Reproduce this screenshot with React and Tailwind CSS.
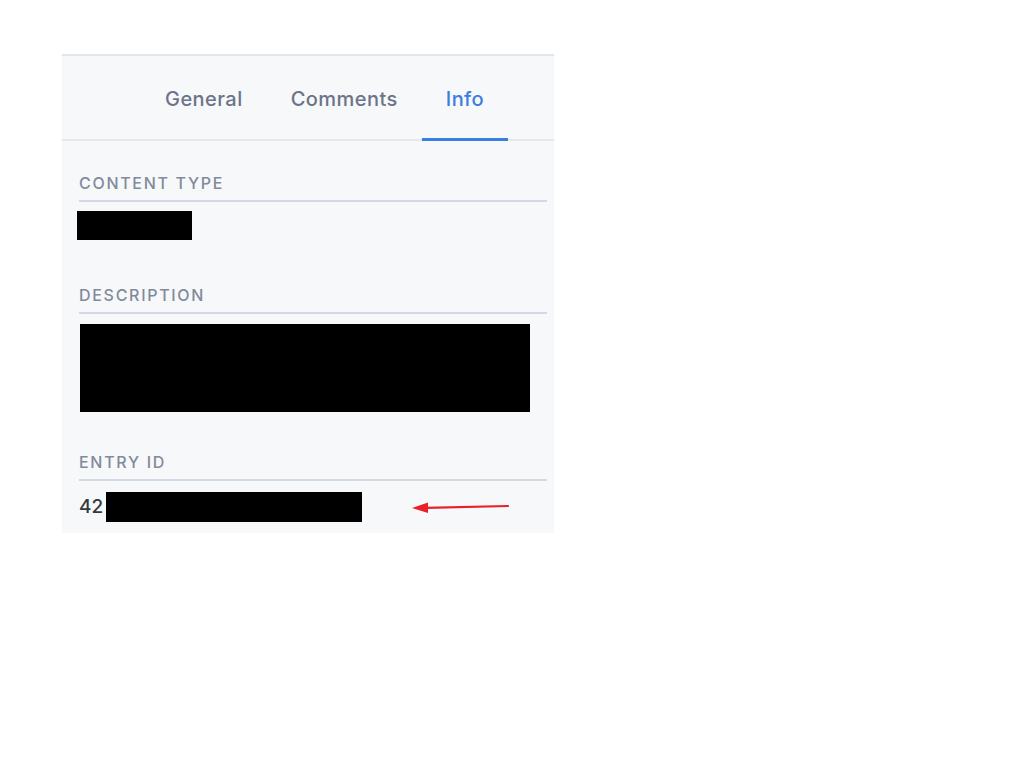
const tabs = [
  { label: "General", active: false },
  { label: "Comments", active: false },
  { label: "Info", active: true },
];

function Redacted({ className }) {
  return <div className={"bg-black " + className} />;
}

function FieldLabel({ children }) {
  return (
    <div className="border-b-2 border-[#d3d9e3] pb-[7px] text-[16px] leading-[20px] tracking-[1.7px] font-medium uppercase text-[#818a9c]">
      {children}
    </div>
  );
}

export default function App() {
  return (
    <div className="min-h-screen bg-white" style={{ fontFamily: "Inter, 'Noto Sans', sans-serif" }}>
      <div className="ml-[62px] pt-[54px] w-[492px]">
        <div className="bg-[#f7f8f9] border-t-2 border-[#e1e5ec]">
          <div className="flex pl-[79px] h-[85px] pt-[3px] border-b-2 border-[#e4e7eb]">
            {tabs.map((t) => (
              <div
                key={t.label}
                className={
                  "flex items-center px-6 text-[20px] tracking-[0.45px] font-medium -mb-[2px] border-b-[3px] " +
                  (t.active ? "text-[#3b7de3] border-[#3b7de3]" : "text-[#6b7489] border-transparent")
                }
              >
                {t.label}
              </div>
            ))}
          </div>

          <div className="pl-[17px] pr-[7px] pb-[11px]">
            <div className="pt-[32px]">
              <FieldLabel>Content Type</FieldLabel>
              <Redacted className="mt-[9px] h-[29px] w-[115px] -ml-[2px]" />
            </div>

            <div className="pt-[45px]">
              <FieldLabel>Description</FieldLabel>
              <Redacted className="mt-[10px] h-[88px] w-[450px] ml-px" />
            </div>

            <div className="pt-[40px]">
              <FieldLabel>Entry ID</FieldLabel>
              <div className="mt-[11px] flex items-center h-[30px]">
                <span className="text-[19px] font-medium text-[#333842] w-[27px]">42</span>
                <Redacted className="h-[30px] w-[256px]" />
                <svg className="ml-[50px]" width="98" height="14" viewBox="0 0 98 14">
                  <path d="M14 7.8 L96 6" stroke="#e8202a" strokeWidth="2.2" strokeLinecap="round" />
                  <path d="M0 8 L16 2.5 L16 13 Z" fill="#e8202a" />
                </svg>
              </div>
            </div>
          </div>
        </div>
      </div>
    </div>
  );
}
